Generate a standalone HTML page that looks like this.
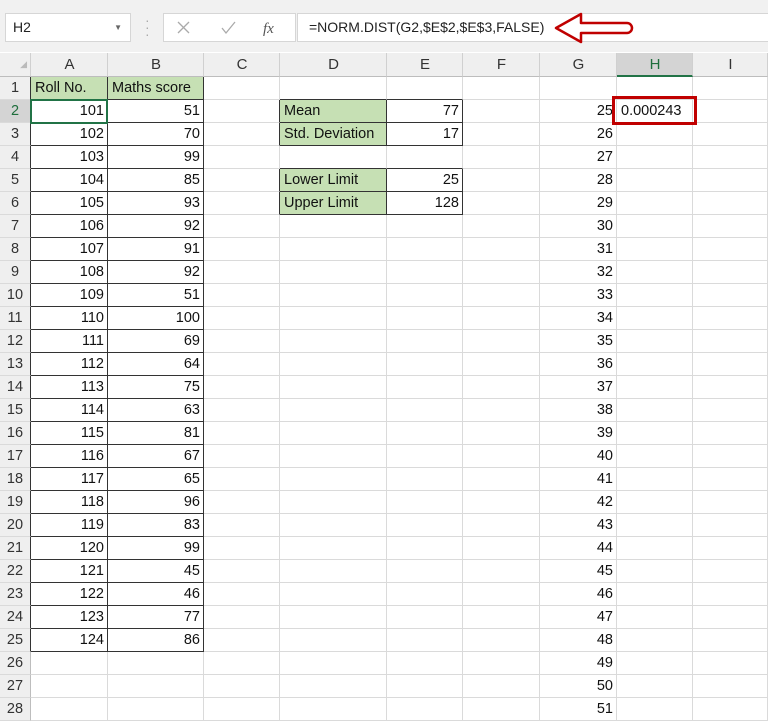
<!DOCTYPE html>
<html><head><style>
body{margin:0;width:768px;height:709px;overflow:hidden;background:#fff;font-family:"Liberation Sans",sans-serif;position:relative}
.top{position:absolute;left:0;top:0;width:768px;height:52px;background:#f1f1f1}
.nb{position:absolute;left:5px;top:13px;width:124px;height:27px;background:#fff;border:1px solid #d6d6d6;font-size:14px;line-height:27px;text-indent:7px;color:#222}
.fb{position:absolute;left:163px;top:13px;width:131px;height:27px;background:#fff;border:1px solid #d6d6d6}
.fx{position:absolute;left:297px;top:13px;width:471px;height:27px;background:#fff;border:1px solid #d6d6d6;border-right:none;font-size:14px;line-height:27px;text-indent:11px;color:#222}
table{position:absolute;left:0;top:53px;border-collapse:separate;border-spacing:0;table-layout:fixed;font-size:14.5px;color:#111}
td{height:23px;border-right:1px solid #dadada;border-bottom:1px solid #dadada;padding:0 3px 0 4px;white-space:nowrap;overflow:hidden;box-sizing:border-box}
tr.h td{height:24px;background:#efefef;text-align:center;font-size:15px;color:#333;border-bottom:1px solid #bdbdbd;border-right:1px solid #d0d0d0}
td.r{background:#efefef;text-align:center;color:#333;border-right:1px solid #bdbdbd;padding:0}
.n{text-align:right}
.g{background:#c6e0b4}
.k{border-right-color:#333!important}
.kb{border-bottom-color:#333!important}
</style></head><body>
<div class="top"></div>
<div class="nb">H2<span style="position:absolute;right:8px;top:0;font-size:8px;color:#666">▼</span></div>
<div style="position:absolute;left:145px;top:17px;color:#aaa;font-size:14px;line-height:7px">·<br>·<br>·</div>
<div class="fb">
<svg width="131" height="27" style="position:absolute;left:0;top:0"><path d="M14 8l11 11M25 8l-11 11" stroke="#aaa" stroke-width="1.3"/><path d="M58 14l4 5 9-11" stroke="#aaa" stroke-width="1.3" fill="none"/><text x="99" y="19" font-family="Liberation Serif" font-style="italic" font-size="15" fill="#555">fx</text></svg></div>
<div class="fx">=NORM.DIST(G2,$E$2,$E$3,FALSE)</div>
<svg width="90" height="40" style="position:absolute;left:550px;top:8px"><path d="M6 20L31 6V15H77A5 5 0 0 1 77 25H31V34Z" fill="none" stroke="#c00000" stroke-width="2.5" stroke-linejoin="round"/></svg>
<table>
<colgroup><col style="width:31px"><col style="width:77px"><col style="width:96px"><col style="width:76px"><col style="width:107px"><col style="width:76px"><col style="width:77px"><col style="width:77px"><col style="width:76px"><col style="width:75px"></colgroup>
<tr class="h"><td style="font-size:9px;color:#bbb;text-align:right">◢</td><td>A</td><td>B</td><td>C</td><td>D</td><td>E</td><td>F</td><td>G</td><td style="background:#d4d4d4;color:#1e6e3c;border-bottom:2px solid #217346">H</td><td>I</td></tr>
<tr><td class="r k">1</td><td class="g k kb">Roll No.</td><td class="g k kb">Maths score</td><td></td><td class="kb"></td><td class="kb"></td><td></td><td></td><td></td><td></td></tr>
<tr><td class="r k" style="background:#d4d4d4;color:#1e6e3c">2</td><td class="n k kb">101</td><td class="n k kb">51</td><td class="k"></td><td class="g k kb">Mean</td><td class="n k kb">77</td><td></td><td class="n">25</td><td>0.000243</td><td></td></tr>
<tr><td class="r k">3</td><td class="n k kb">102</td><td class="n k kb">70</td><td class="k"></td><td class="g k kb">Std. Deviation</td><td class="n k kb">17</td><td></td><td class="n">26</td><td></td><td></td></tr>
<tr><td class="r k">4</td><td class="n k kb">103</td><td class="n k kb">99</td><td></td><td class="kb"></td><td class="kb"></td><td></td><td class="n">27</td><td></td><td></td></tr>
<tr><td class="r k">5</td><td class="n k kb">104</td><td class="n k kb">85</td><td class="k"></td><td class="g k kb">Lower Limit</td><td class="n k kb">25</td><td></td><td class="n">28</td><td></td><td></td></tr>
<tr><td class="r k">6</td><td class="n k kb">105</td><td class="n k kb">93</td><td class="k"></td><td class="g k kb">Upper Limit</td><td class="n k kb">128</td><td></td><td class="n">29</td><td></td><td></td></tr>
<tr><td class="r k">7</td><td class="n k kb">106</td><td class="n k kb">92</td><td></td><td></td><td></td><td></td><td class="n">30</td><td></td><td></td></tr>
<tr><td class="r k">8</td><td class="n k kb">107</td><td class="n k kb">91</td><td></td><td></td><td></td><td></td><td class="n">31</td><td></td><td></td></tr>
<tr><td class="r k">9</td><td class="n k kb">108</td><td class="n k kb">92</td><td></td><td></td><td></td><td></td><td class="n">32</td><td></td><td></td></tr>
<tr><td class="r k">10</td><td class="n k kb">109</td><td class="n k kb">51</td><td></td><td></td><td></td><td></td><td class="n">33</td><td></td><td></td></tr>
<tr><td class="r k">11</td><td class="n k kb">110</td><td class="n k kb">100</td><td></td><td></td><td></td><td></td><td class="n">34</td><td></td><td></td></tr>
<tr><td class="r k">12</td><td class="n k kb">111</td><td class="n k kb">69</td><td></td><td></td><td></td><td></td><td class="n">35</td><td></td><td></td></tr>
<tr><td class="r k">13</td><td class="n k kb">112</td><td class="n k kb">64</td><td></td><td></td><td></td><td></td><td class="n">36</td><td></td><td></td></tr>
<tr><td class="r k">14</td><td class="n k kb">113</td><td class="n k kb">75</td><td></td><td></td><td></td><td></td><td class="n">37</td><td></td><td></td></tr>
<tr><td class="r k">15</td><td class="n k kb">114</td><td class="n k kb">63</td><td></td><td></td><td></td><td></td><td class="n">38</td><td></td><td></td></tr>
<tr><td class="r k">16</td><td class="n k kb">115</td><td class="n k kb">81</td><td></td><td></td><td></td><td></td><td class="n">39</td><td></td><td></td></tr>
<tr><td class="r k">17</td><td class="n k kb">116</td><td class="n k kb">67</td><td></td><td></td><td></td><td></td><td class="n">40</td><td></td><td></td></tr>
<tr><td class="r k">18</td><td class="n k kb">117</td><td class="n k kb">65</td><td></td><td></td><td></td><td></td><td class="n">41</td><td></td><td></td></tr>
<tr><td class="r k">19</td><td class="n k kb">118</td><td class="n k kb">96</td><td></td><td></td><td></td><td></td><td class="n">42</td><td></td><td></td></tr>
<tr><td class="r k">20</td><td class="n k kb">119</td><td class="n k kb">83</td><td></td><td></td><td></td><td></td><td class="n">43</td><td></td><td></td></tr>
<tr><td class="r k">21</td><td class="n k kb">120</td><td class="n k kb">99</td><td></td><td></td><td></td><td></td><td class="n">44</td><td></td><td></td></tr>
<tr><td class="r k">22</td><td class="n k kb">121</td><td class="n k kb">45</td><td></td><td></td><td></td><td></td><td class="n">45</td><td></td><td></td></tr>
<tr><td class="r k">23</td><td class="n k kb">122</td><td class="n k kb">46</td><td></td><td></td><td></td><td></td><td class="n">46</td><td></td><td></td></tr>
<tr><td class="r k">24</td><td class="n k kb">123</td><td class="n k kb">77</td><td></td><td></td><td></td><td></td><td class="n">47</td><td></td><td></td></tr>
<tr><td class="r k">25</td><td class="n k kb">124</td><td class="n k kb">86</td><td></td><td></td><td></td><td></td><td class="n">48</td><td></td><td></td></tr>
<tr><td class="r">26</td><td></td><td></td><td></td><td></td><td></td><td></td><td class="n">49</td><td></td><td></td></tr>
<tr><td class="r">27</td><td></td><td></td><td></td><td></td><td></td><td></td><td class="n">50</td><td></td><td></td></tr>
<tr><td class="r">28</td><td></td><td></td><td></td><td></td><td></td><td></td><td class="n">51</td><td></td><td></td></tr>
</table>
<div style="position:absolute;left:30px;top:99px;width:78px;height:25px;border:2px solid #217346;box-sizing:border-box"></div>
<div style="position:absolute;left:612px;top:96px;width:85px;height:29px;border:3px solid #c00000;box-sizing:border-box"></div>
</body></html>
